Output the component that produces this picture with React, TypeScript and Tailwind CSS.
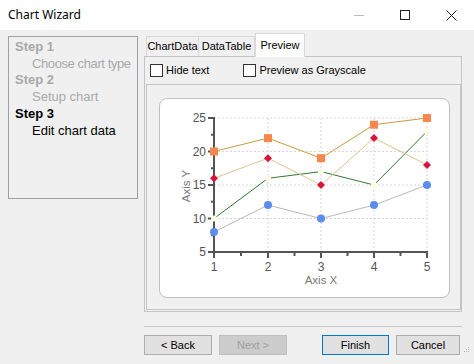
import React from 'react';

type Series = { values: number[]; line: string; marker: 'square' | 'diamond' | 'circle' | 'dot'; fill: string };

const xs = [54, 108, 161, 214, 267];
const yOf = (v: number) => 153 - (v - 5) * 6.7;

const series: Series[] = [
  { values: [8, 12, 10, 12, 15], line: '#b9b9b9', marker: 'circle', fill: '#5b8def' },
  { values: [10, 16, 17, 15, 23], line: '#2f7a2f', marker: 'dot', fill: '#fdfbe0' },
  { values: [16, 19, 15, 22, 18], line: '#dcc48e', marker: 'diamond', fill: '#d8143c' },
  { values: [20, 22, 19, 24, 25], line: '#c99a3e', marker: 'square', fill: '#f7874f' },
];

const Marker: React.FC<{ x: number; y: number; kind: Series['marker']; fill: string }> = ({ x, y, kind, fill }) => {
  if (kind === 'square') return <rect x={x - 4} y={y - 4} width={8} height={8} fill={fill} />;
  if (kind === 'diamond') return <polygon points={`${x},${y - 4} ${x + 4},${y} ${x},${y + 4} ${x - 4},${y}`} fill={fill} />;
  if (kind === 'circle') return <circle cx={x} cy={y} r={4} fill={fill} />;
  return <circle cx={x} cy={y} r={3} fill={fill} />;
};

const chartFont = "'Liberation Sans', Arial, sans-serif";

const Chart: React.FC = () => (
  <svg width={291} height={200} className="block">
    {/* grid */}
    {xs.slice(1).map((x) => (
      <line key={`gx${x}`} x1={x} y1={yOf(25)} x2={x} y2={153} stroke="#d6d6d6" strokeDasharray="2 2" />
    ))}
    {[10, 15, 20, 25].map((v) => (
      <line key={`gy${v}`} x1={54} y1={yOf(v)} x2={267} y2={yOf(v)} stroke="#d6d6d6" strokeDasharray="2 2" />
    ))}
    {/* axes */}
    <line x1={54} y1={yOf(25) - 1} x2={54} y2={154} stroke="#555" strokeWidth={2} />
    <line x1={53} y1={153} x2={268} y2={153} stroke="#555" strokeWidth={2} />
    {[5, 10, 15, 20, 25].map((v) => (
      <line key={`ty${v}`} x1={48} y1={yOf(v)} x2={54} y2={yOf(v)} stroke="#555" strokeWidth={2} />
    ))}
    {[7.5, 12.5, 17.5, 22.5].map((v) => (
      <line key={`my${v}`} x1={51} y1={yOf(v)} x2={54} y2={yOf(v)} stroke="#555" strokeWidth={2} />
    ))}
    {xs.map((x) => (
      <line key={`tx${x}`} x1={x} y1={153} x2={x} y2={159} stroke="#555" strokeWidth={2} />
    ))}
    {xs.slice(0, 4).map((x, i) => (
      <line key={`mx${x}`} x1={(x + xs[i + 1]) / 2} y1={153} x2={(x + xs[i + 1]) / 2} y2={157} stroke="#555" strokeWidth={2} />
    ))}
    {/* labels */}
    {[5, 10, 15, 20, 25].map((v) => (
      <text key={`ly${v}`} x={46} y={yOf(v) + 4} textAnchor="end" fontSize={12} fill="#555" fontFamily={chartFont}>
        {v}
      </text>
    ))}
    {xs.map((x, i) => (
      <text key={`lx${x}`} x={x} y={172} textAnchor="middle" fontSize={12} fill="#555" fontFamily={chartFont}>
        {i + 1}
      </text>
    ))}
    <text x={161} y={185} textAnchor="middle" fontSize={11.5} fill="#777" fontFamily={chartFont}>
      Axis X
    </text>
    <text x={0} y={0} transform="translate(30 87) rotate(-90)" textAnchor="middle" fontSize={11.5} fill="#777" fontFamily={chartFont}>
      Axis Y
    </text>
    {/* series */}
    {series.map((s, si) => (
      <g key={si}>
        <polyline points={s.values.map((v, i) => `${xs[i]},${yOf(v)}`).join(' ')} fill="none" stroke={s.line} strokeWidth={1} />
        {s.values.map((v, i) => (
          <Marker key={i} x={xs[i]} y={yOf(v)} kind={s.marker} fill={s.fill} />
        ))}
      </g>
    ))}
  </svg>
);

const Checkbox: React.FC<{ label: string }> = ({ label }) => (
  <label className="flex items-center gap-[3px]">
    <span className="w-[13px] h-[13px] border border-[#333] bg-white" />
    <span>{label}</span>
  </label>
);

const Button: React.FC<{ label: string; disabled?: boolean; primary?: boolean; w: string }> = ({ label, disabled, primary, w }) => (
  <button
    className={`${w} h-[20px] flex items-center justify-center border ${
      disabled
        ? 'border-[#bfbfbf] bg-[#cccccc] text-[#a0a0a0]'
        : primary
          ? 'border-[#0078d7] bg-[#e1e1e1] text-black'
          : 'border-[#adadad] bg-[#e1e1e1] text-black'
    }`}
  >
    {label}
  </button>
);

export default function App() {
  return (
    <div className="w-[474px] h-[364px] bg-[#f0f0f0] flex flex-col text-[11px] text-black font-['Liberation_Sans',Arial,sans-serif] overflow-hidden">
      {/* title bar */}
      <div className="h-[30px] bg-white flex items-center shrink-0">
        <span className="pl-[8px] text-[12px] font-['Noto_Sans','Liberation_Sans',sans-serif] text-black">Chart Wizard</span>
        <div className="ml-auto flex items-center h-full">
          <div className="w-[46px] h-full flex items-center justify-center">
            <span className="w-[10px] h-px bg-[#bdbdbd]" />
          </div>
          <div className="w-[46px] h-full flex items-center justify-center">
            <span className="w-[10px] h-[10px] border border-[#222]" />
          </div>
          <div className="w-[46px] h-full flex items-center justify-center">
            <svg width="11" height="11" viewBox="0 0 11 11">
              <path d="M0.5 0.5 L10.5 10.5 M10.5 0.5 L0.5 10.5" stroke="#222" strokeWidth="1" />
            </svg>
          </div>
        </div>
      </div>

      <div className="flex pl-[8px] pt-[3px] gap-[6px]">
        {/* steps */}
        <div className="w-[130px] h-[163px] mt-[3px] border border-[#a0a0a0] pl-[6px] pt-[2px] text-[13px] leading-[16.7px] whitespace-nowrap">
          <div className="font-bold text-[#a9a9a9]">Step 1</div>
          <div className="pl-[17px] text-[#a9a9a9] tracking-[-0.4px]">Choose chart type</div>
          <div className="font-bold text-[#a9a9a9]">Step 2</div>
          <div className="pl-[17px] text-[#a9a9a9]">Setup chart</div>
          <div className="font-bold text-black">Step 3</div>
          <div className="pl-[17px] text-black">Edit chart data</div>
        </div>

        {/* tab control */}
        <div className="w-[318px] flex flex-col">
          <div className="h-[23px] flex items-end pl-[2px] relative z-10">
            <div className="w-[53px] h-[20px] border border-b-0 border-[#d9d9d9] flex items-center justify-center">ChartData</div>
            <div className="w-[56px] h-[20px] border border-l-0 border-b-0 border-[#d9d9d9] flex items-center justify-center">DataTable</div>
            <div className="w-[50px] h-[24px] -mb-px bg-white border border-b-0 border-[#d9d9d9] flex items-start pt-[3px] justify-center">Preview</div>
          </div>
          <div className="h-[256px] border border-[#c4c4c4] bg-[#f0f0f0] flex flex-col">
            <div className="h-[27px] flex items-center gap-[34px] pl-[5px]">
              <Checkbox label="Hide text" />
              <Checkbox label="Preview as Grayscale" />
            </div>
            <div className="ml-[1px] mr-0 h-[226px] border border-[#c4c4c4] pl-[12px] pt-[13px]">
              <div className="w-[291px] h-[200px] bg-white border border-[#c0c0c0] rounded-[8px] overflow-hidden">
                <Chart />
              </div>
            </div>
          </div>
        </div>
      </div>

      {/* footer */}
      <div className="ml-[144px] mr-[12px] mt-[14px] h-px bg-[#c8c8c8]" />
      <div className="flex items-center pl-[144px] pt-[8px] gap-[7px] relative">
        <Button label="< Back" w="w-[68px]" />
        <Button label="Next >" w="w-[68px]" disabled />
        <div className="w-[21px]" />
        <Button label="Finish" w="w-[67px]" primary />
        <Button label="Cancel" w="w-[64px]" />
        <svg width="6" height="6" className="absolute left-[464px] top-[20px]" viewBox="0 0 6 6">
          <rect x="4" y="0" width="1" height="1" fill="#b8b8b8" />
          <rect x="2" y="2" width="1" height="1" fill="#b8b8b8" />
          <rect x="4" y="2" width="1" height="1" fill="#b8b8b8" />
          <rect x="0" y="4" width="1" height="1" fill="#b8b8b8" />
          <rect x="2" y="4" width="1" height="1" fill="#b8b8b8" />
          <rect x="4" y="4" width="1" height="1" fill="#b8b8b8" />
        </svg>
      </div>
    </div>
  );
}
